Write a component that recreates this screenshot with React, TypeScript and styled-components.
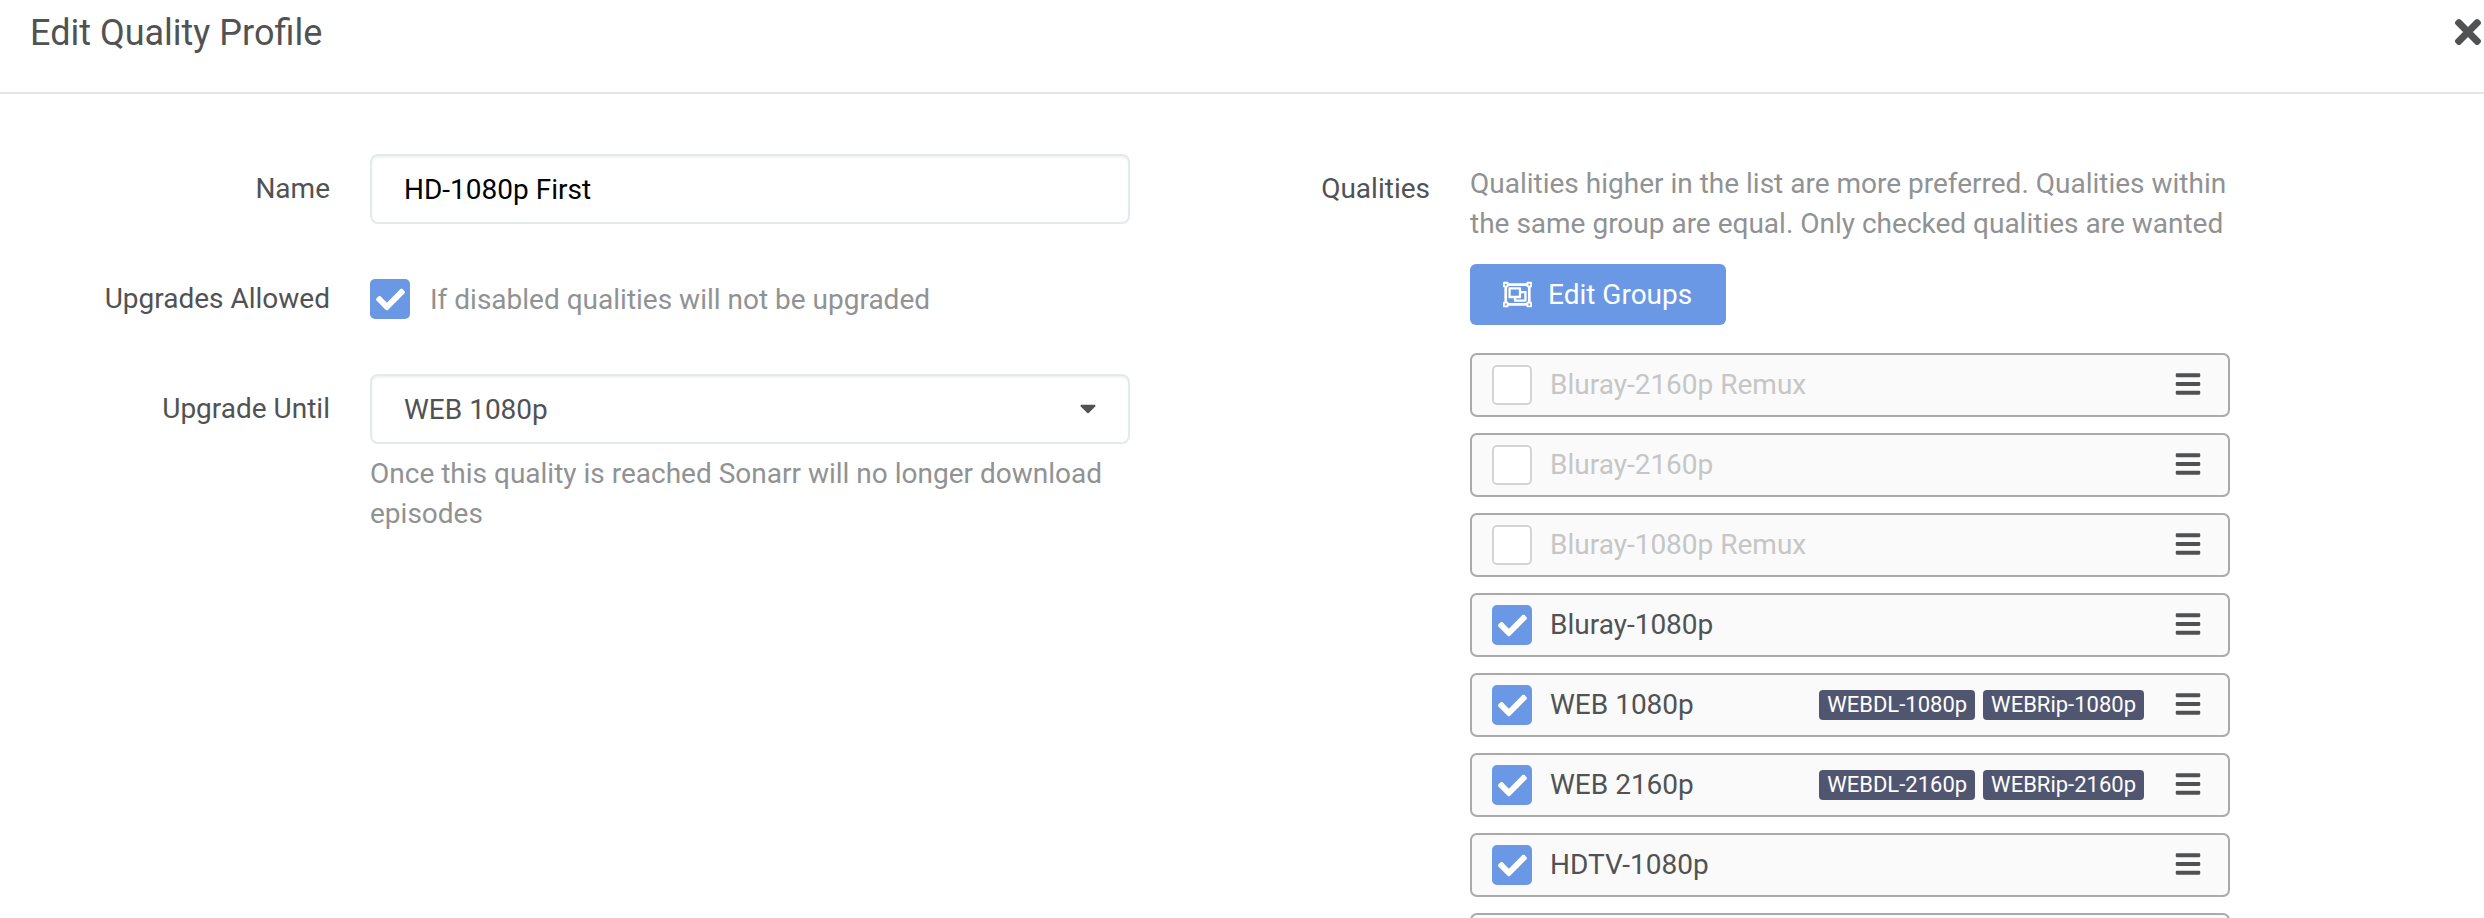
import React, { FC } from 'react';
import styled, { createGlobalStyle } from 'styled-components';
import { FaBars, FaCaretDown, FaCheck, FaRegObjectGroup, FaTimes } from 'react-icons/fa';

const GlobalStyle = createGlobalStyle`
   html, body {
      margin: 0;
      height: 100%;
      overflow: hidden;
      background: #fff;
   }

   body {
      font-family: Roboto, "Liberation Sans", sans-serif;
      font-size: 28px;
      color: #515253;
   }

   * {
      box-sizing: border-box;
   }
`;

const QUALITIES = [
   { name: 'Bluray-2160p Remux', checked: false, items: [] },
   { name: 'Bluray-2160p', checked: false, items: [] },
   { name: 'Bluray-1080p Remux', checked: false, items: [] },
   { name: 'Bluray-1080p', checked: true, items: [] },
   { name: 'WEB 1080p', checked: true, items: ['WEBDL-1080p', 'WEBRip-1080p'] },
   { name: 'WEB 2160p', checked: true, items: ['WEBDL-2160p', 'WEBRip-2160p'] },
   { name: 'HDTV-1080p', checked: true, items: [] },
];

const Check: FC<{ checked: boolean }> = ({ checked }) => (
   <CheckBox $checked={checked}>{checked && <FaCheck size={29} />}</CheckBox>
);

const App: FC = () => {
   return (
      <>
         <GlobalStyle />
         <Header>
            <Title>Edit Quality Profile</Title>
            <CloseButton>
               <FaTimes size={38} />
            </CloseButton>
         </Header>
         <Body>
            <LeftColumn>
               <FormRow>
                  <Label $width={330}>Name</Label>
                  <Field $dark>HD-1080p First</Field>
               </FormRow>
               <CheckRow>
                  <Label $width={330}>Upgrades Allowed</Label>
                  <Check checked />
                  <InlineHelp>If disabled qualities will not be upgraded</InlineHelp>
               </CheckRow>
               <FormRow>
                  <Label $width={330}>Upgrade Until</Label>
                  <Control>
                     <Field>
                        WEB 1080p
                        <FaCaretDown size={26} />
                     </Field>
                     <HelpText>
                        Once this quality is reached Sonarr will no longer download episodes
                     </HelpText>
                  </Control>
               </FormRow>
            </LeftColumn>
            <RightColumn>
               <FormRow>
                  <Label $width={170}>Qualities</Label>
                  <Control>
                     <QualitiesHelp>
                        Qualities higher in the list are more preferred. Qualities within the same
                        group are equal. Only checked qualities are wanted
                     </QualitiesHelp>
                     <GroupsButton>
                        <FaRegObjectGroup size={29} />
                        Edit Groups
                     </GroupsButton>
                     <QualityList>
                        {QUALITIES.map((quality) => (
                           <QualityRow key={quality.name}>
                              <Check checked={quality.checked} />
                              <QualityName $muted={!quality.checked}>{quality.name}</QualityName>
                              {quality.items.map((item) => (
                                 <Badge key={item}>{item}</Badge>
                              ))}
                              <DragHandle>
                                 <FaBars size={28} />
                              </DragHandle>
                           </QualityRow>
                        ))}
                        {/* next row only shows its top edge above the fold */}
                        <QualityRow />
                     </QualityList>
                  </Control>
               </FormRow>
            </RightColumn>
         </Body>
      </>
   );
};

const Header = styled.header`
   display: flex;
   align-items: center;
   justify-content: space-between;
   height: 94px;
   padding: 0 0 26px 30px;
   border-bottom: 2px solid #e5e5e5;
`;

const Title = styled.h1`
   margin: 0;
   font-size: 36px;
   font-weight: 400;
   line-height: 1;
`;

const CloseButton = styled.div`
   display: flex;
   margin: -3px -3px 0 0;
   color: #515253;
`;

const Body = styled.main`
   display: flex;
   gap: 130px;
   padding-top: 60px;
`;

const LeftColumn = styled.section`
   display: flex;
   flex-direction: column;
   gap: 40px;
   width: 1130px;
`;

const RightColumn = styled.section`
   width: 970px;
`;

const FormRow = styled.div`
   display: flex;
   align-items: flex-start;
   gap: 40px;
`;

const CheckRow = styled.div`
   display: flex;
   align-items: center;
   height: 70px;
`;

const Label = styled.label<{ $width: number }>`
   flex: none;
   width: ${({ $width }) => $width}px;
   line-height: 70px;
   text-align: right;
   white-space: nowrap;

   ${CheckRow} & {
      margin-right: 40px;
   }
`;

const Control = styled.div`
   width: 760px;
`;

const Field = styled.div<{ $dark?: boolean }>`
   display: flex;
   align-items: center;
   justify-content: space-between;
   width: 760px;
   height: 70px;
   padding: 0 27px 0 32px;
   border: 2px solid #e4eaec;
   border-radius: 8px;
   box-shadow: inset 0 2px 2px rgba(0, 0, 0, 0.05);
   color: ${({ $dark }) => ($dark ? '#000' : '#515253')};

   svg {
      margin-top: -2px;
   }
`;

const CheckBox = styled.span<{ $checked: boolean }>`
   display: flex;
   flex: none;
   align-items: center;
   justify-content: center;
   width: 40px;
   height: 40px;
   border: 2px solid ${({ $checked }) => ($checked ? '#6a98e4' : '#d5d5d5')};
   border-radius: 5px;
   background: ${({ $checked }) => ($checked ? '#6a98e4' : '#fff')};
   color: #fff;
`;

const InlineHelp = styled.span`
   margin-left: 20px;
   color: #909293;
`;

const HelpText = styled.p`
   margin: 10px 0 0;
   color: #909293;
   line-height: 40px;
`;

const QualitiesHelp = styled(HelpText)`
   margin: 10px 0 0;
`;

const GroupsButton = styled.button`
   display: flex;
   align-items: center;
   gap: 16px;
   width: 256px;
   height: 61px;
   margin-top: 20px;
   padding: 0 0 0 33px;
   border: 0;
   border-radius: 6px;
   background: #6a98e4;
   color: #fff;
   font: inherit;
`;

const QualityList = styled.div`
   display: flex;
   flex-direction: column;
   gap: 16px;
   margin-top: 28px;
`;

const QualityRow = styled.div`
   display: flex;
   align-items: center;
   flex: none;
   width: 760px;
   height: 64px;
   padding: 0 26px 0 20px;
   border: 2px solid #aaa;
   border-radius: 7px;
   background: #fafafa;
`;

const QualityName = styled.span<{ $muted: boolean }>`
   flex: 1;
   margin-left: 18px;
   padding-bottom: 2px;
   color: ${({ $muted }) => ($muted ? '#c6c6c6' : '#515253')};
   white-space: nowrap;
`;

const Badge = styled.span`
   height: 30px;
   margin-left: 8px;
   padding: 0 8px;
   border-radius: 4px;
   background: #515670;
   color: #fff;
   font-size: 22px;
   line-height: 30px;
   white-space: nowrap;
`;

const DragHandle = styled.span`
   display: flex;
   margin: -3px 0 0 30px;
   color: #515253;
`;

export default App;
